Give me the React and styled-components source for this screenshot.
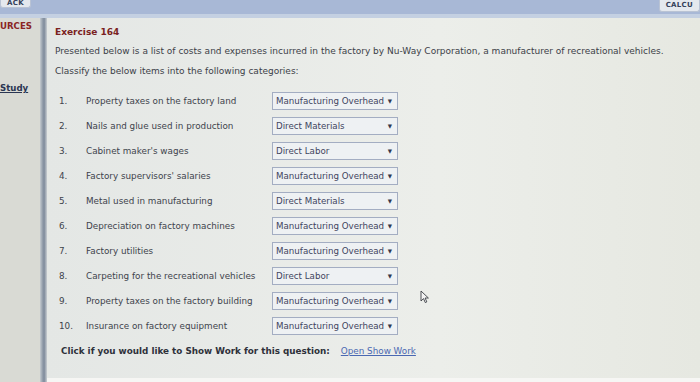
import styled, { createGlobalStyle } from "styled-components";

const GlobalStyle = createGlobalStyle`
  html, body {
    margin: 0;
    padding: 0;
    background: #e9ebe8;
  }
  body {
    font-family: "DejaVu Sans", Verdana, sans-serif;
    overflow: hidden;
  }
`;

const Page = styled.div`
  width: 700px;
  height: 382px;
  display: flex;
  flex-direction: column;
  position: relative;
  overflow: hidden;
`;

const TopBar = styled.div`
  height: 14px;
  flex: none;
  background: #a8b8d6;
  display: flex;
  justify-content: space-between;
  align-items: flex-start;
  border-bottom: 4px solid #c4d0e2;
`;

const TopTab = styled.div`
  height: ${(p) => (p.$small ? "7px" : "11px")};
  padding: 0 6px;
  background: #e4e8ee;
  border: 1px solid #b9c3d4;
  border-top: none;
  border-radius: 0 0 3px 3px;
  font-size: 7px;
  font-weight: bold;
  color: #34405a;
  line-height: ${(p) => (p.$small ? "7px" : "10px")};
  letter-spacing: 0.3px;
`;

const Body = styled.div`
  flex: 1;
  display: flex;
  min-height: 0;
`;

const Sidebar = styled.div`
  width: 40px;
  flex: none;
  background: #d9dad4;
  display: flex;
  flex-direction: column;
  padding-top: 3px;
  font-size: 8.6px;
  font-weight: bold;
`;

const SideLabel = styled.div`
  color: ${(p) => (p.$link ? "#2a3552" : "#8a2424")};
  text-decoration: ${(p) => (p.$link ? "underline" : "none")};
  margin-top: ${(p) => p.$gap || 0}px;
`;

const Divider = styled.div`
  width: 7px;
  flex: none;
  background: linear-gradient(90deg, #c5cbd0 0, #8f9aa8 40%, #7f8b9c 60%, #c9ced2 100%);
`;

const Main = styled.div`
  flex: 1;
  display: flex;
  flex-direction: column;
  background: linear-gradient(90deg, #e4e7e5 0%, #eceeea 60%, #e6e8e1 100%);
  border-bottom: 4px solid #f6f6f4;
`;

const Content = styled.div`
  padding: 7px 0 0 8px;
  display: flex;
  flex-direction: column;
`;

const Title = styled.div`
  font-size: 9px;
  font-weight: bold;
  color: #7a2222;
  line-height: 14px;
`;

const Para = styled.div`
  font-size: 9px;
  color: #3c3f48;
  line-height: 14px;
  margin-top: ${(p) => p.$mt || 0}px;
`;

const List = styled.div`
  display: flex;
  flex-direction: column;
  margin-top: 10px;
`;

const Row = styled.div`
  display: grid;
  grid-template-columns: 27px 186px 126px;
  align-items: center;
  height: 25px;
  padding-left: 4px;
  font-size: 8.8px;
  color: #40434c;
`;

const Num = styled.span``;

const Select = styled.div`
  height: 18px;
  box-sizing: border-box;
  border: 1px solid #a3adc2;
  background: #eef1f3;
  display: flex;
  align-items: center;
  justify-content: space-between;
  padding: 0 5px 0 3px;
  font-size: 8.7px;
  color: #3e4460;
  white-space: nowrap;
`;

const Arrow = styled.span`
  font-size: 5.5px;
  color: #30384e;
  margin-left: 3px;
`;

const ShowWork = styled.div`
  display: flex;
  gap: 11px;
  margin-top: 6px;
  padding-left: 6px;
  font-size: 8.8px;
  line-height: 14px;
  font-weight: bold;
  color: #2e313a;
`;

const Link = styled.a`
  font-weight: normal;
  color: #4a68b2;
  text-decoration: underline;
`;

const Cursor = styled.svg`
  position: absolute;
  left: 420px;
  top: 290px;
`;

const rows = [
  ["Property taxes on the factory land", "Manufacturing Overhead"],
  ["Nails and glue used in production", "Direct Materials"],
  ["Cabinet maker's wages", "Direct Labor"],
  ["Factory supervisors' salaries", "Manufacturing Overhead"],
  ["Metal used in manufacturing", "Direct Materials"],
  ["Depreciation on factory machines", "Manufacturing Overhead"],
  ["Factory utilities", "Manufacturing Overhead"],
  ["Carpeting for the recreational vehicles", "Direct Labor"],
  ["Property taxes on the factory building", "Manufacturing Overhead"],
  ["Insurance on factory equipment", "Manufacturing Overhead"],
];

export default function App() {
  return (
    <Page>
      <GlobalStyle />
      <TopBar>
        <TopTab $small>ACK</TopTab>
        <TopTab>CALCU</TopTab>
      </TopBar>
      <Body>
        <Sidebar>
          <SideLabel>URCES</SideLabel>
          <SideLabel $link $gap={52}>Study</SideLabel>
        </Sidebar>
        <Divider />
        <Main>
          <Content>
            <Title>Exercise 164</Title>
            <Para $mt={5}>
              Presented below is a list of costs and expenses incurred in the factory by Nu-Way Corporation, a manufacturer of recreational vehicles.
            </Para>
            <Para $mt={6}>Classify the below items into the following categories:</Para>
            <List>
              {rows.map(([item, cat], i) => (
                <Row key={i}>
                  <Num>{i + 1}.</Num>
                  <span>{item}</span>
                  <Select>
                    <span>{cat}</span>
                    <Arrow>▼</Arrow>
                  </Select>
                </Row>
              ))}
            </List>
            <ShowWork>
              <span>Click if you would like to Show Work for this question:</span>
              <Link href="#">Open Show Work</Link>
            </ShowWork>
          </Content>
        </Main>
      </Body>
      <Cursor width="10" height="14" viewBox="0 0 10 14">
        <path d="M1 1 L1 11 L3.5 8.6 L5.3 12.6 L6.8 11.9 L5.1 8 L8.4 8 Z" fill="#f4f4f4" stroke="#3a3d44" strokeWidth="0.9" strokeLinejoin="round" />
      </Cursor>
    </Page>
  );
}
